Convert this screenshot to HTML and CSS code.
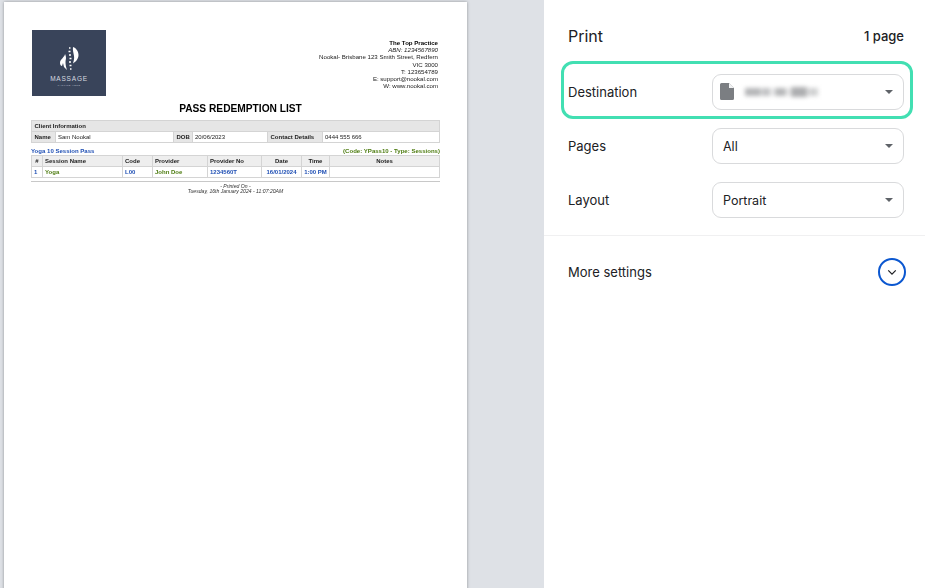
FILE: index.html
```html
<!DOCTYPE html>
<html lang="en">
<head>
<meta charset="utf-8">
<title>Print</title>
<link rel="stylesheet" href="styles.css">
</head>
<body>
<div class="app">
  <main class="preview">
    <article class="paper">
      <header class="doc-head">
        <svg class="logo" viewBox="0 0 74 66" aria-hidden="true">
          <rect width="74" height="66" fill="#39445a"/>
          <path d="M33 24c0 3-5 5-5 9 0 2 1 3 2 3l1-3 1 4 3 3c-1-3-1.500-5-1.500-8 0-2 .5-3 .5-4 0-2-.5-3-1-4z" fill="#fff"/>
          <path d="M41 17c3 1 5.500 4 5.500 8 0 4-3 7-5.500 8.500 .5-2.500 1.500-4.500 1-7.500-.5-3-1.500-6-1-9z" fill="#fff"/>
          <path d="M37 18h1.500M36.500 21.500h2M37 25h2M37.500 28.500h2M37 32h2M37.500 35.500h2M38 39h1.500" stroke="#fff" stroke-width="1.600" fill="none"/>
          <text x="37" y="51" text-anchor="middle" class="logo-name">MASSAGE</text>
          <text x="37" y="55.500" text-anchor="middle" class="logo-tag">TAGLINE HERE</text>
        </svg>
        <address class="practice">
          <strong>The Top Practice</strong><br>
          <em>ABN: 1234567890</em><br>
          Nookal- Brisbane 123 Smith Street, Redfern<br>
          VIC 3000<br>
          T: 123654789<br>
          E: support@nookal.com<br>
          W: www.nookal.com
        </address>
      </header>

      <h1 class="doc-title">PASS REDEMPTION LIST</h1>

      <table class="doc-table client">
        <colgroup>
          <col class="c-name"><col class="c-val"><col class="c-dob"><col class="c-dobv"><col class="c-con"><col>
        </colgroup>
        <tr><th colspan="6" class="left">Client Information</th></tr>
        <tr>
          <th class="left">Name</th><td>Sam Nookal</td>
          <th class="left">DOB</th><td>20/06/2023</td>
          <th class="left">Contact Details</th><td>0444 555 666</td>
        </tr>
      </table>

      <div class="pass-head">
        <span class="blue">Yoga 10 Session Pass</span>
        <span class="green">(Code: YPass10 - Type: Sessions)</span>
      </div>

      <table class="doc-table sessions">
        <colgroup>
          <col class="s-n"><col class="s-name"><col class="s-code"><col class="s-prov"><col class="s-no"><col class="s-date"><col class="s-time"><col>
        </colgroup>
        <tr>
          <th>#</th><th class="left">Session Name</th><th class="left">Code</th><th class="left">Provider</th><th class="left">Provider No</th><th>Date</th><th>Time</th><th>Notes</th>
        </tr>
        <tr class="bold">
          <td class="blue">1</td><td class="green">Yoga</td><td class="blue">L00</td><td class="green">John Doe</td><td class="blue">1234560T</td><td class="blue center">16/01/2024</td><td class="blue center">1:00 PM</td><td></td>
        </tr>
      </table>

      <footer class="printed">
        <div>- Printed On -</div>
        <div>Tuesday, 16th January 2024 - 11:07:20AM</div>
      </footer>
    </article>
  </main>

  <aside class="sidebar">
    <div class="title-row">
      <h2 class="print-title">Print</h2>
      <span class="page-count">1 page</span>
    </div>

    <div class="settings">
      <div class="row">
        <span class="highlight"></span>
        <span class="label">Destination</span>
        <div class="select">
          <svg class="file-icon" viewBox="0 0 14 17" aria-hidden="true">
            <path d="M1.500 0H9l5 5v10.500a1.500 1.500 0 0 1-1.500 1.500h-11A1.500 1.500 0 0 1 0 15.500v-14A1.500 1.500 0 0 1 1.500 0z" fill="#7b7e82"/>
            <path d="M9 0l5 5H9z" fill="#f1f2f3"/>
          </svg>
          <span class="redacted" aria-hidden="true"><i></i><i></i><i></i><i></i><i></i><i></i><i></i></span>
          <span class="caret"></span>
        </div>
      </div>
      <div class="row">
        <span class="label">Pages</span>
        <div class="select"><span>All</span><span class="caret"></span></div>
      </div>
      <div class="row">
        <span class="label">Layout</span>
        <div class="select"><span>Portrait</span><span class="caret"></span></div>
      </div>
    </div>

    <div class="more">
      <span class="label">More settings</span>
      <span class="more-btn">
        <svg viewBox="0 0 12 8" aria-hidden="true"><path d="M1.500 1.500 6 6l4.500-4.500" fill="none" stroke="#202124" stroke-width="1.500"/></svg>
      </span>
    </div>
  </aside>
</div>
</body>
</html>
```

FILE: styles.css
```css
* { box-sizing: border-box; }

html, body {
  margin: 0;
  height: 100%;
  overflow: hidden;
}

body {
  background: #dee1e6;
  font-family: Inter, "Liberation Sans", sans-serif;
  color: #202124;
}

.app {
  display: flex;
  height: 588px;
}

/* Preview */
.preview {
  width: 544px;
  flex: none;
  padding: 2px 0 0 4px;
  overflow: hidden;
}

.paper {
  width: 463px;
  height: 640px;
  background: #fff;
  padding: 28px 27px 0 27px;
  box-shadow: 0 0 3px rgba(0, 0, 0, 0.35);
  font-family: "Liberation Sans", Arial, sans-serif;
  font-size: 6.100px;
  color: #222;
  filter: blur(0.300px);
}

.doc-head {
  display: flex;
  justify-content: space-between;
  align-items: flex-start;
  padding-left: 1px;
  padding-right: 2px;
}

.logo {
  display: block;
  width: 74px;
  height: 66px;
}

.logo-name {
  font-family: "Liberation Sans", sans-serif;
  font-size: 6.500px;
  letter-spacing: 0.800px;
  fill: #d8dbe0;
}

.logo-tag {
  font-family: "Liberation Sans", sans-serif;
  font-size: 2.500px;
  letter-spacing: 0.400px;
  fill: #b4bac5;
}

.practice {
  padding-top: 9px;
  font-style: normal;
  text-align: right;
  line-height: 7.200px;
  font-size: 6.100px;
}

.practice strong { color: #000; }

.doc-title {
  margin: 7px 0 5px;
  padding-left: 10px;
  text-align: center;
  font-size: 10.200px;
  line-height: 12px;
  font-weight: 700;
  color: #000;
}

.doc-table {
  width: 100%;
  table-layout: fixed;
  border-collapse: collapse;
  border: 1px solid #d0d0d0;
  font-size: 6px;
}

.doc-table th,
.doc-table td {
  height: 11px;
  padding: 0 2px;
  border: 1px solid #d4d4d4;
  white-space: nowrap;
  overflow: hidden;
}

.doc-table th {
  background: #e6e6e6;
  font-weight: 700;
  color: #222;
}

.doc-table .left { text-align: left; }
.doc-table .center { text-align: center; }
.bold td { font-weight: 700; }

.client th.left { padding-left: 2.500px; }

.c-name { width: 24px; }
.c-val { width: 118px; }
.c-dob { width: 19px; }
.c-dobv { width: 75px; }
.c-con { width: 55px; }

.sessions th { background: #eeeeee; }

.s-n { width: 11px; }
.s-name { width: 80px; }
.s-code { width: 30px; }
.s-prov { width: 55px; }
.s-no { width: 54px; }
.s-date { width: 40px; }
.s-time { width: 28px; }

.pass-head {
  display: flex;
  justify-content: space-between;
  margin-top: 5px;
  height: 7px;
  line-height: 7px;
  font-size: 6.050px;
  font-weight: 700;
}

.blue { color: #1f4fb4; }
.green { color: #4d7c10; }

.printed {
  margin-top: 3px;
  padding-top: 2px;
  border-top: 1px solid #c8c8c8;
  text-align: center;
  font-style: italic;
  font-size: 5.100px;
  line-height: 5px;
  color: #333;
}

/* Sidebar */
.sidebar {
  flex: 1;
  background: #fff;
  padding-top: 25px;
}

.title-row {
  display: flex;
  justify-content: space-between;
  align-items: center;
  height: 22px;
  padding: 0 21px 0 24px;
}

.print-title {
  margin: 0;
  font-size: 16px;
  font-weight: 400;
}

.page-count {
  font-size: 13px;
  font-weight: 500;
}

.settings {
  display: flex;
  flex-direction: column;
  gap: 18px;
  padding: 27px 21px 17px 24px;
  border-bottom: 1px solid #f0f0f1;
}

.row {
  position: relative;
  display: flex;
  justify-content: space-between;
  align-items: center;
  height: 36px;
}

.highlight {
  position: absolute;
  left: -7px;
  right: -9px;
  top: -13px;
  bottom: -9px;
  border: 3px solid #42dfb2;
  border-radius: 12px;
}

.label {
  font-size: 13px;
}

.select {
  display: flex;
  align-items: center;
  width: 192px;
  height: 36px;
  padding: 0 10px 0 10px;
  border: 1px solid #d9dadc;
  border-radius: 9px;
  font-size: 12.500px;
}

.caret {
  margin-left: auto;
  width: 0;
  height: 0;
  border-left: 4px solid transparent;
  border-right: 4px solid transparent;
  border-top: 4px solid #5f6368;
}

.file-icon {
  width: 14px;
  height: 17px;
  flex: none;
  margin-left: -3px;
  margin-top: -1px;
}

.redacted {
  display: flex;
  gap: 1px;
  align-items: center;
  height: 12px;
  margin-left: 11px;
  filter: blur(2px);
}

.redacted i {
  display: block;
  height: 8px;
  background: #b5b6b8;
}

.redacted i:nth-child(1) { width: 16px; }
.redacted i:nth-child(2) { width: 8px; background: #c0c1c3; }
.redacted i:nth-child(3) { width: 3px; background: #e2e2e3; }
.redacted i:nth-child(4) { width: 11px; }
.redacted i:nth-child(5) { width: 3px; background: #e2e2e3; }
.redacted i:nth-child(6) { width: 16px; height: 10px; background: #adaeb0; }
.redacted i:nth-child(7) { width: 10px; background: #d0d1d2; }

.more {
  display: flex;
  justify-content: space-between;
  align-items: center;
  height: 28px;
  margin-top: 22px;
  padding: 0 19px 0 24px;
}

.more-btn {
  display: flex;
  align-items: center;
  justify-content: center;
  width: 28px;
  height: 28px;
  border: 2px solid #0b57d0;
  border-radius: 50%;
}

.more-btn svg {
  width: 10px;
  height: 7px;
}
```
